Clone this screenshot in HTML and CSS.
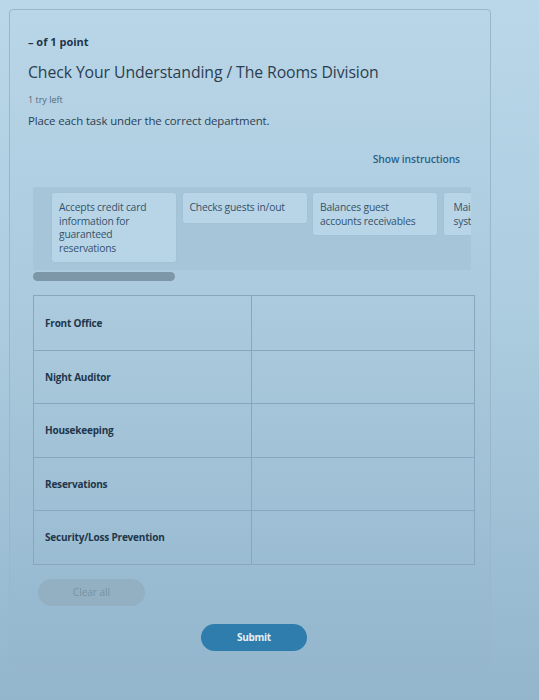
FILE: index.html
```html
<!DOCTYPE html>
<html lang="en">
<head>
<meta charset="utf-8">
<title>Check Your Understanding</title>
<link rel="stylesheet" href="styles.css">
</head>
<body>
<div class="card">
  <div class="points">– of 1 point</div>
  <h1 class="title">Check Your Understanding / The Rooms Division</h1>
  <div class="tries">1 try left</div>
  <p class="prompt">Place each task under the correct department.</p>
  <div class="show-row"><a class="show-link">Show instructions</a></div>

  <div class="bank">
    <div class="bank-track">
      <div class="task">Accepts credit card information for guaranteed reservations</div>
      <div class="task">Checks guests in/out</div>
      <div class="task">Balances guest accounts receivables</div>
      <div class="task task-cut">Maintains systems</div>
    </div>
  </div>
  <div class="scrollbar"></div>

  <div class="grid">
    <div class="row"><div class="label">Front Office</div><div class="drop"></div></div>
    <div class="row"><div class="label">Night Auditor</div><div class="drop"></div></div>
    <div class="row"><div class="label">Housekeeping</div><div class="drop"></div></div>
    <div class="row"><div class="label">Reservations</div><div class="drop"></div></div>
    <div class="row"><div class="label">Security/Loss Prevention</div><div class="drop"></div></div>
  </div>

  <button class="btn-clear" type="button">Clear all</button>
  <div class="submit-row"><button class="btn-submit" type="button">Submit</button></div>
</div>
</body>
</html>
```

FILE: styles.css
```css
html, body {
  margin: 0;
  padding: 0;
}
body {
  width: 539px;
  height: 700px;
  overflow: hidden;
  font-family: "Open Sans", "Noto Sans", sans-serif;
  color: #24384a;
  background: linear-gradient(180deg, #bad7e9 0%, #acccdf 45%, #93b6cd 100%);
  padding-top: 9px;
  box-sizing: border-box;
}
.card {
  margin-left: 9px;
  width: 482px;
  height: 659px;
  box-sizing: border-box;
  border: 1px solid #98b7cb;
  border-radius: 4px;
  padding: 25px 18px 0 18px;
  background: linear-gradient(180deg, #b9d6e8 0%, #abcadd 45%, #94b7ce 100%);
}
.points {
  font-size: 11px;
  line-height: 13px;
  font-weight: 700;
  color: #22364a;
}
.title {
  margin: 13px 0 0 0;
  font-size: 15.8px;
  line-height: 22px;
  font-weight: 400;
  color: #2b3e50;
  letter-spacing: -0.1px;
}
.tries {
  margin-top: 11px;
  font-size: 9px;
  line-height: 12px;
  color: #536a7b;
}
.prompt {
  margin: 8px 0 0 0;
  font-size: 11.4px;
  line-height: 14px;
  color: #2b3f51;
  letter-spacing: -0.1px;
}
.show-row {
  margin-top: 25px;
  display: flex;
  justify-content: flex-end;
  padding-right: 12px;
}
.show-link {
  font-size: 10.3px;
  line-height: 13px;
  font-weight: 600;
  color: #2a6289;
  letter-spacing: -0.1px;
}
.bank {
  margin: 21px 1px 0 5px;
  height: 83px;
  background: #a6c5d9;
  overflow: hidden;
  border-radius: 2px;
}
.bank-track {
  display: flex;
  align-items: flex-start;
  gap: 6.5px;
  padding: 6px 0 0 19px;
  width: max-content;
}
.task {
  width: 124px;
  box-sizing: border-box;
  padding: 8px 20px 7px 7px;
  background: #b8d5e7;
  border-radius: 2px;
  font-size: 10.3px;
  line-height: 13.5px;
  color: #35526a;
  letter-spacing: -0.2px;
  box-shadow: 0 0 1px rgba(80, 110, 130, 0.25);
}
.task:nth-child(2) {
  padding-bottom: 8px;
}
.task-cut {
  padding-left: 10px;
  padding-right: 60px;
}
.scrollbar {
  margin: 2px 0 0 5px;
  width: 142px;
  height: 9px;
  border-radius: 5px;
  background: #7d97a8;
}
.grid {
  margin: 14px 0 0 5px;
  width: 440px;
  border: 1px solid #86a7bd;
  display: flex;
  flex-direction: column;
}
.row {
  display: grid;
  grid-template-columns: 218px 1fr;
  height: 53.5px;
  border-top: 1px solid #86a7bd;
  box-sizing: border-box;
}
.row:first-child {
  border-top: none;
}
.label {
  display: flex;
  align-items: center;
  padding-left: 11px;
  font-size: 10px;
  font-weight: 700;
  color: #22364b;
  letter-spacing: -0.2px;
  border-right: 1px solid #86a7bd;
}
.btn-clear {
  display: block;
  margin: 14px 0 0 10px;
  width: 107px;
  height: 27px;
  border: none;
  border-radius: 14px;
  background: #93b0c3;
  color: #7690a2;
  font-family: "Open Sans", "Noto Sans", sans-serif;
  font-size: 10px;
  padding: 0;
}
.submit-row {
  margin-top: 18px;
  display: flex;
  padding-left: 173px;
}
.btn-submit {
  width: 106px;
  height: 27px;
  border: none;
  border-radius: 14px;
  background: #2f7dac;
  color: #e6f0f6;
  font-family: "Open Sans", "Noto Sans", sans-serif;
  font-size: 10px;
  font-weight: 700;
  letter-spacing: -0.3px;
  padding: 0;
}
```
